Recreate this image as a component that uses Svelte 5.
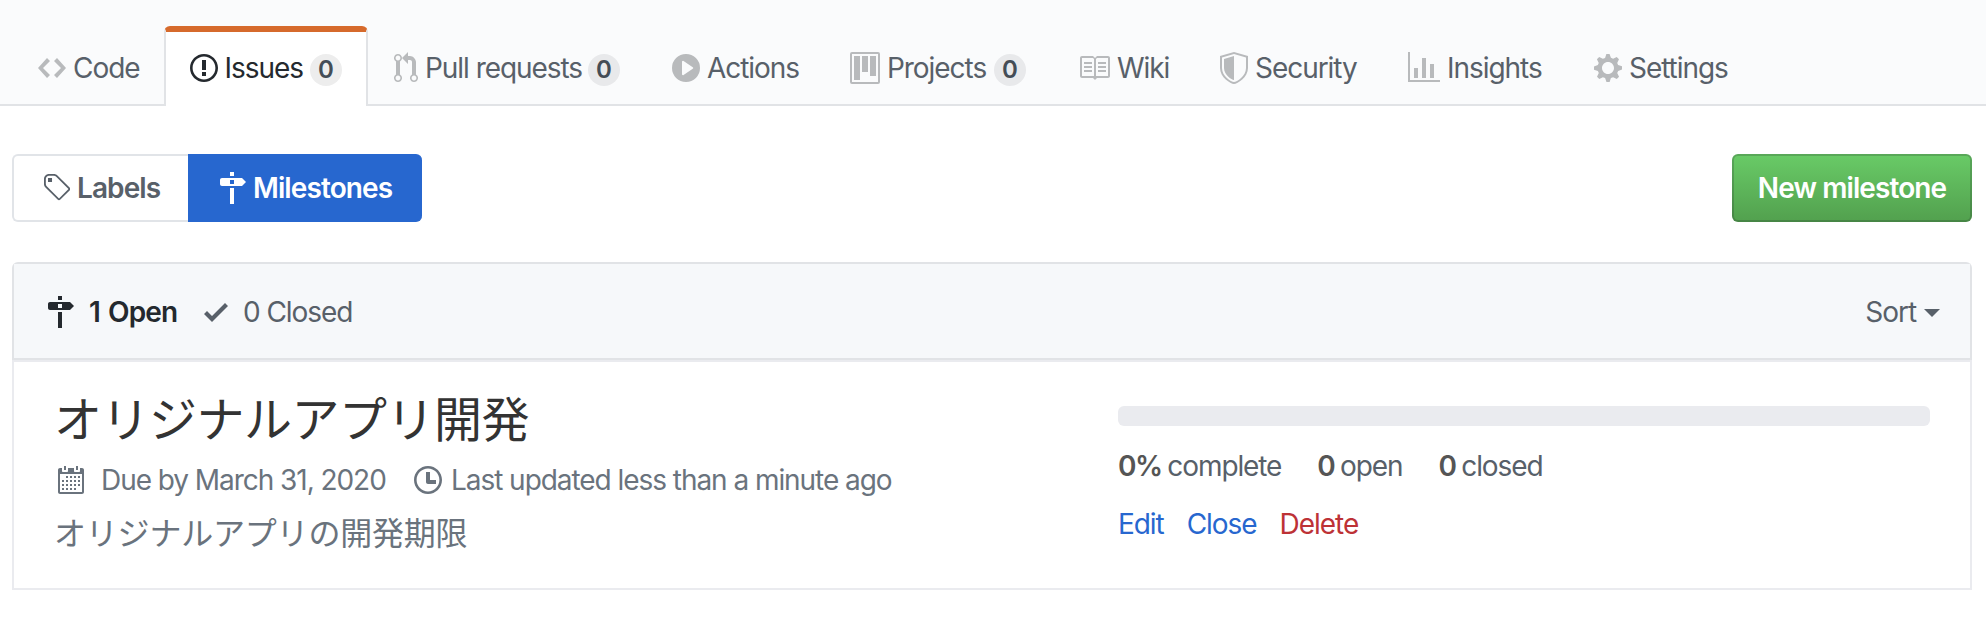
<script lang="ts">
	interface Tab {
		label: string;
		icon: IconName;
		count?: number;
		active?: boolean;
	}

	const icons = {
		code: {
			width: 14,
			path: 'M9.5 3L8 4.5 11.5 8 8 11.5 9.5 13 14 8 9.5 3zm-5 0L0 8l4.5 5L6 11.5 2.5 8 6 4.5 4.5 3z'
		},
		issue: {
			width: 14,
			path: 'M7 2.3c3.14 0 5.7 2.56 5.7 5.7s-2.56 5.7-5.7 5.7A5.71 5.71 0 0 1 1.3 8c0-3.14 2.56-5.7 5.7-5.7zM7 1C3.14 1 0 4.14 0 8s3.14 7 7 7 7-3.14 7-7-3.14-7-7-7zm1 3H6v5h2V4zm0 6H6v2h2v-2z'
		},
		pull: {
			width: 12,
			path: 'M11 11.28V5c-.03-.78-.34-1.47-.94-2.06C9.46 2.35 8.78 2.03 8 2H7V0L4 3l3 3V4h1c.27.02.48.11.69.31.21.2.3.42.31.69v6.28A1.993 1.993 0 0 0 10 15a1.993 1.993 0 0 0 1-3.72zm-1 2.92c-.66 0-1.2-.55-1.2-1.2 0-.65.55-1.2 1.2-1.2.65 0 1.2.55 1.2 1.2 0 .65-.55 1.2-1.2 1.2zM4 3c0-1.11-.89-2-2-2a1.993 1.993 0 0 0-1 3.72v6.56A1.993 1.993 0 0 0 2 15a1.993 1.993 0 0 0 1-3.72V4.72c.59-.34 1-.98 1-1.72zm-.8 10c0 .66-.55 1.2-1.2 1.2-.65 0-1.2-.55-1.2-1.2 0-.65.55-1.2 1.2-1.2.65 0 1.2.55 1.2 1.2zM2 4.2C1.34 4.2.8 3.65.8 3c0-.65.55-1.2 1.2-1.2.65 0 1.2.55 1.2 1.2 0 .65-.55 1.2-1.2 1.2z'
		},
		play: {
			width: 14,
			path: 'M14 8A7 7 0 1 1 0 8a7 7 0 0 1 14 0zm-8.223 3.482l4.599-3.066a.5.5 0 0 0 0-.832L5.777 4.518A.5.5 0 0 0 5 4.934v6.132a.5.5 0 0 0 .777.416z'
		},
		project: {
			width: 15,
			path: 'M10 12h3V2h-3v10zm-4-2h3V2H6v8zm-4 4h3V2H2v12zm-1 1h13V1H1v14zM14 0H1a1 1 0 0 0-1 1v14a1 1 0 0 0 1 1h13a1 1 0 0 0 1-1V1a1 1 0 0 0-1-1z'
		},
		book: {
			width: 16,
			path: 'M3 5h4v1H3V5zm0 3h4V7H3v1zm0 2h4V9H3v1zm11-5h-4v1h4V5zm0 2h-4v1h4V7zm0 2h-4v1h4V9zm2-6v9c0 .55-.45 1-1 1H9.5l-1 1-1-1H2c-.55 0-1-.45-1-1V3c0-.55.45-1 1-1h5.5l1 1 1-1H15c.55 0 1 .45 1 1zm-8 .5L7.5 3H2v9h6V3.5zm7-.5H9.5l-.5.5V12h6V3z'
		},
		shield: {
			width: 14,
			path: 'M0 2l7-2 7 2v6.02C14 12.69 8.69 16 7 16c-1.69 0-7-3.31-7-7.98V2zm1 .75L7 1l6 1.75v5.268C13 12.104 8.449 15 7 15c-1.449 0-6-2.896-6-6.982V2.75zm1 .75L7 2v12c-1.207 0-5-2.482-5-5.985V3.5z'
		},
		graph: {
			width: 16,
			path: 'M16 14v1H0V0h1v14h15zM5 13H3V8h2v5zm4 0H7V3h2v10zm4 0h-2V6h2v7z'
		},
		gear: {
			width: 14,
			path: 'M14 8.77v-1.6l-1.94-.64-.45-1.09.88-1.84-1.13-1.13-1.81.91-1.09-.45-.69-1.92h-1.6l-.63 1.94-1.11.45-1.84-.88-1.13 1.13.91 1.81-.45 1.09L0 7.23v1.59l1.94.64.45 1.09-.88 1.84 1.13 1.13 1.81-.91 1.09.45.69 1.92h1.59l.63-1.94 1.11-.45 1.84.88 1.13-1.13-.92-1.81.47-1.09L14 8.75v.02zM7 11c-1.66 0-3-1.34-3-3s1.34-3 3-3 3 1.34 3 3-1.34 3-3 3z'
		},
		tag: {
			width: 14,
			path: 'M7.73 1.73C7.26 1.26 6.62 1 5.96 1H3.5C2.13 1 1 2.13 1 3.5v2.47c0 .66.27 1.3.73 1.77l6.06 6.06c.39.39 1.02.39 1.41 0l4.59-4.59a.996.996 0 0 0 0-1.41L7.73 1.73zM2.38 7.09c-.31-.3-.47-.7-.47-1.13V3.5c0-.88.72-1.59 1.59-1.59h2.47c.42 0 .83.16 1.13.47l6.14 6.13-4.73 4.73-6.13-6.15zM3.01 3h2v2H3V3h.01z'
		},
		milestone: {
			width: 14,
			path: 'M8 2H6V0h2v2zm4 5H2c-.55 0-1-.45-1-1V4c0-.55.45-1 1-1h10l2 2-2 2zM8 4H6v2h2V4zM6 16h2V8H6v8z'
		},
		check: {
			width: 12,
			path: 'M12 5l-8 8-4-4 1.5-1.5L4 10l6.5-6.5L12 5z'
		},
		calendar: {
			width: 14,
			path: 'M13 2h-1v1.5c0 .28-.22.5-.5.5h-2c-.28 0-.5-.22-.5-.5V2H6v1.5c0 .28-.22.5-.5.5h-2c-.28 0-.5-.22-.5-.5V2H2c-.55 0-1 .45-1 1v11c0 .55.45 1 1 1h11c.55 0 1-.45 1-1V3c0-.55-.45-1-1-1zm0 12H2V5h11v9zM5 3H4V1h1v2zm6 0h-1V1h1v2zM6 7H5V6h1v1zm2 0H7V6h1v1zm2 0H9V6h1v1zm2 0h-1V6h1v1zM4 9H3V8h1v1zm2 0H5V8h1v1zm2 0H7V8h1v1zm2 0H9V8h1v1zm2 0h-1V8h1v1zm-8 2H3v-1h1v1zm2 0H5v-1h1v1zm2 0H7v-1h1v1zm2 0H9v-1h1v1zm2 0h-1v-1h1v1zm-8 2H3v-1h1v1zm2 0H5v-1h1v1zm2 0H7v-1h1v1zm2 0H9v-1h1v1z'
		},
		clock: {
			width: 14,
			path: 'M8 8h3v2H7c-.55 0-1-.45-1-1V4h2v4zM7 2.3c3.14 0 5.7 2.56 5.7 5.7s-2.56 5.7-5.7 5.7A5.71 5.71 0 0 1 1.3 8c0-3.14 2.56-5.7 5.7-5.7zM7 1C3.14 1 0 4.14 0 8s3.14 7 7 7 7-3.14 7-7-3.14-7-7-7z'
		}
	};

	type IconName = keyof typeof icons;

	const tabs: Tab[] = [
		{ label: 'Code', icon: 'code' },
		{ label: 'Issues', icon: 'issue', count: 0, active: true },
		{ label: 'Pull requests', icon: 'pull', count: 0 },
		{ label: 'Actions', icon: 'play' },
		{ label: 'Projects', icon: 'project', count: 0 },
		{ label: 'Wiki', icon: 'book' },
		{ label: 'Security', icon: 'shield' },
		{ label: 'Insights', icon: 'graph' },
		{ label: 'Settings', icon: 'gear' }
	];

	const milestone = {
		title: 'オリジナルアプリ開発',
		due: 'Due by March 31, 2020',
		updated: 'Last updated less than a minute ago',
		description: 'オリジナルアプリの開発期限',
		open: 0,
		closed: 0,
		progress: 0
	};
</script>

{#snippet icon(name: IconName)}
	<svg
		class="icon"
		width={icons[name].width * 2}
		height="32"
		viewBox={`0 0 ${icons[name].width} 16`}
		aria-hidden="true"
	>
		<path fill-rule="evenodd" d={icons[name].path} />
	</svg>
{/snippet}

<nav class="repo-nav">
	{#each tabs as tab}
		<a href="#top" class="tab" class:active={tab.active}>
			{@render icon(tab.icon)}
			<span class="tab-label">{tab.label}</span>
			{#if tab.count !== undefined}
				<span class="counter">{tab.count}</span>
			{/if}
		</a>
	{/each}
</nav>

<main>
	<div class="toolbar">
		<div class="subnav">
			<a href="#top" class="subnav-item">{@render icon('tag')}<span>Labels</span></a>
			<a href="#top" class="subnav-item selected">
				{@render icon('milestone')}<span>Milestones</span>
			</a>
		</div>
		<button class="new-milestone">New milestone</button>
	</div>

	<section class="box">
		<header class="box-header">
			<a href="#top" class="state open">{@render icon('milestone')}<span>1 Open</span></a>
			<a href="#top" class="state closed">{@render icon('check')}<span>0 Closed</span></a>
			<button class="sort">Sort<i class="caret"></i></button>
		</header>

		<article class="milestone">
			<div class="info">
				<h2>{milestone.title}</h2>
				<div class="meta">
					{@render icon('calendar')}
					<span class="due">{milestone.due}</span>
					{@render icon('clock')}
					<span class="updated">{milestone.updated}</span>
				</div>
				<p>{milestone.description}</p>
			</div>

			<div class="stats">
				<div class="progress">
					<div class="progress-value" style={`width: ${milestone.progress}%`}></div>
				</div>
				<div class="counts">
					<span><b>{milestone.progress}%</b> complete</span>
					<span><b>{milestone.open}</b> open</span>
					<span><b>{milestone.closed}</b> closed</span>
				</div>
				<div class="actions">
					<a href="#top">Edit</a>
					<a href="#top">Close</a>
					<a href="#top" class="danger">Delete</a>
				</div>
			</div>
		</article>
	</section>
</main>

<style>
	:global(body) {
		margin: 0;
		background: #ffffff;
		color: #24292e;
		font-family: Inter, 'Noto Sans CJK JP', sans-serif;
		font-size: 28px;
		line-height: 42px;
		letter-spacing: -1.05px;
	}

	a {
		color: inherit;
		text-decoration: none;
	}

	button {
		font: inherit;
		letter-spacing: inherit;
		cursor: pointer;
	}

	span,
	button {
		white-space: nowrap;
	}

	.icon {
		flex: none;
		display: block;
		fill: currentColor;
	}

	.repo-nav {
		display: grid;
		grid-template-columns: 153px 203px 278px 178px 228px 142px 188px 186px 188px;
		box-sizing: border-box;
		height: 106px;
		padding: 26px 0 0 12px;
		background: #fafbfc;
		box-shadow: inset 0 -2px #e1e3e6;
	}

	.tab {
		display: flex;
		align-items: flex-start;
		box-sizing: border-box;
		height: 80px;
		padding: 20px 24px 0;
		border: 2px solid transparent;
		border-top: 0;
		border-bottom: 0;
		border-radius: 6px 6px 0 0;
		padding-top: 26px;
		color: #586069;
	}

	.tab .icon {
		color: #b8babc;
	}

	.tab-label {
		margin: -5px 0 0 7px;
	}

	.tab.active {
		margin-left: -1px;
		padding-top: 20px;
		border-top: 6px solid #d66a2c;
		border-right-color: #e1e3e6;
		border-left-color: #e1e3e6;
		background: #ffffff;
		color: #24292e;
	}

	.tab.active .tab-label {
		margin-left: 6.5px;
	}

	.tab.active .icon {
		color: #24292e;
	}

	.counter {
		box-sizing: border-box;
		min-width: 32px;
		height: 32px;
		margin: 2px 0 0 auto;
		border-radius: 16px;
		background: #e8e9eb;
		color: #444d56;
		font-size: 24px;
		font-weight: 600;
		line-height: 32px;
		letter-spacing: 0;
		text-align: center;
	}

	.tab.active .counter {
		background: #ededed;
	}

	main {
		padding: 48px 14px 0 12px;
	}

	.toolbar {
		display: flex;
		justify-content: space-between;
		margin-bottom: 40px;
	}

	.subnav {
		display: flex;
	}

	.subnav-item {
		display: flex;
		align-items: flex-start;
		box-sizing: border-box;
		width: 176px;
		height: 68px;
		padding: 16px 0 0 28px;
		border: 2px solid #e1e4e8;
		border-right: 0;
		border-radius: 6px 0 0 6px;
		color: #586069;
		font-weight: 600;
		letter-spacing: -0.9px;
	}

	.subnav-item span {
		margin: -5px 0 0 7px;
	}

	.subnav-item.selected {
		width: 234px;
		border-color: #2767cf;
		border-radius: 0 6px 6px 0;
		background: #2767cf;
		color: #ffffff;
	}

	.new-milestone {
		width: 240px;
		height: 68px;
		padding: 0;
		border: 2px solid rgba(27, 31, 35, 0.2);
		border-radius: 6px;
		background: linear-gradient(#69cb67, #52a04e) border-box;
		color: #ffffff;
		font-weight: 600;
		letter-spacing: -0.9px;
	}

	.box {
		border: 2px solid #e1e3e6;
		border-radius: 6px 6px 0 0;
		border-bottom: 0;
	}

	.box-header {
		display: flex;
		align-items: flex-start;
		box-sizing: border-box;
		height: 96px;
		padding: 32px 30px 0 32px;
		border-bottom: 2px solid #e1e3e6;
		background: #f6f8fa;
		color: #586069;
	}

	.state {
		display: flex;
	}

	.state span {
		margin: -5px 0 0 15px;
	}

	.state.open {
		width: 158px;
		color: #24292e;
		font-weight: 600;
		letter-spacing: -0.9px;
		word-spacing: 2px;
	}

	.sort {
		display: flex;
		align-items: center;
		gap: 8px;
		margin: -5px 0 0 auto;
		padding: 0;
		border: 0;
		background: none;
		color: #586069;
	}

	.caret {
		border: 8px solid transparent;
		border-top-color: currentColor;
		border-bottom: 0;
		margin-top: 2px;
	}

	.milestone {
		display: flex;
		box-sizing: border-box;
		height: 230px;
		margin: 0 -2px;
		border: 2px solid #eaebef;
	}

	.info {
		box-sizing: border-box;
		width: 1104px;
		padding: 29px 0 0 40px;
		color: #6a737d;
	}

	h2 {
		margin: 0;
		color: #333333;
		font-size: 48px;
		font-weight: 400;
		letter-spacing: -0.5px;
		line-height: 58px;
	}

	.meta {
		display: flex;
		align-items: flex-start;
		height: 46px;
		margin-top: 15px;
		padding-left: 2px;
	}

	.meta span {
		margin-top: -5px;
	}

	.due {
		width: 313px;
		padding-left: 17px;
	}

	.updated {
		padding-left: 9px;
	}

	.info p {
		margin: 0;
		font-size: 32px;
		letter-spacing: -0.2px;
		line-height: 48px;
	}

	.stats {
		width: 812px;
		padding-top: 44px;
	}

	.progress {
		height: 20px;
		border-radius: 6px;
		background: #eaebef;
		overflow: hidden;
	}

	.progress-value {
		height: 100%;
		background: #2cbe4e;
	}

	.counts {
		display: flex;
		gap: 36px;
		margin-top: 19px;
		color: #586069;
		letter-spacing: -1.1px;
		word-spacing: -1px;
	}

	.counts b {
		color: #555555;
		font-weight: 600;
		letter-spacing: -1.5px;
	}

	.actions {
		display: flex;
		gap: 23px;
		margin-top: 16px;
		color: #2767cf;
	}

	.danger {
		color: #bd3236;
	}
</style>
